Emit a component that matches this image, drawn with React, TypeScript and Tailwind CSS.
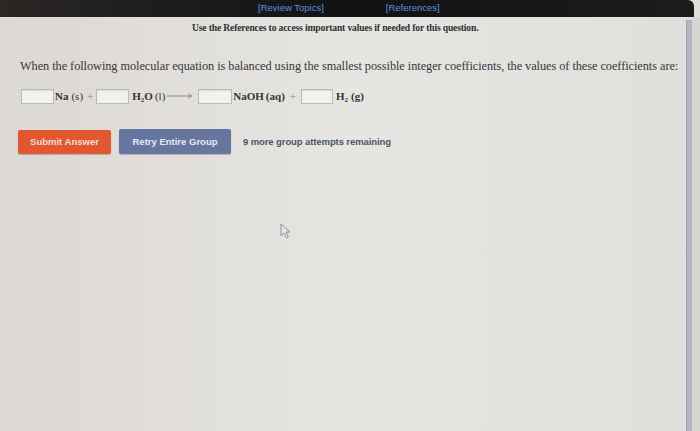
function Blank({ w = 'w-[33px]' }: { w?: string }) {
  return <span className={`inline-block ${w} h-[15px] bg-[#f1f1ef] border border-[#b9bcbf] shadow-[inset_0_1px_1px_rgba(0,0,0,0.1)]`} />
}

export default function App() {
  return (
    <div className="w-[700px] h-[431px] overflow-hidden flex flex-col bg-[#dedcd8] bg-gradient-to-r from-[#dcd8d4] via-[#e6e5e2] to-[#dfdfdb]">
      {/* Top bar */}
      <div className="h-[17px] flex items-center bg-gradient-to-r from-[#2a2725] via-[#121212] to-[#1c1c1c] pl-[258px] gap-[62px] mr-[6px] rounded-tr-[6px] font-['Liberation_Sans',sans-serif] text-[9.5px] text-[#5c8fe0]">
        <span>[Review Topics]</span>
        <span>[References]</span>
      </div>

      <div className="flex flex-1">
        <div className="flex-1 flex flex-col">
          <p className="mt-[4px] pl-[192px] font-['Liberation_Serif',serif] font-bold text-[9.6px] text-[#2f2f33] tracking-[-0.15px]">
            Use the References to access important values if needed for this question.
          </p>

          <p className="mt-[22px] pl-[20px] font-['Liberation_Serif',serif] text-[12.3px] text-[#38373a] tracking-[-0.05px]">
            When the following molecular equation is balanced using the smallest possible integer coefficients, the values of these coefficients are:
          </p>

          <div className="mt-[12px] pl-[21px] flex items-center font-['Liberation_Serif',serif] text-[11px] text-[#333] font-bold">
            <Blank w="w-[33px]" />
            <span className="ml-[1px]">Na</span>
            <span className="ml-[3px] font-normal">(s)</span>
            <span className="ml-[4px] mr-[3px] font-normal text-[#888]">+</span>
            <Blank w="w-[33px]" />
            <span className="ml-[3px]">H<sub className="text-[7px]">2</sub>O</span>
            <span className="ml-[2px] font-normal">(l)</span>
            <svg width="26" height="6" viewBox="0 0 26 6" className="ml-[2px] mr-[5px]">
              <line x1="0" y1="3" x2="24" y2="3" stroke="#777" strokeWidth="0.8" />
              <path d="M21 1 L25 3 L21 5" fill="none" stroke="#777" strokeWidth="0.8" />
            </svg>
            <Blank w="w-[34px]" />
            <span className="ml-[1px]">NaOH</span>
            <span className="ml-[2px]">(aq)</span>
            <span className="ml-[5px] mr-[5px] font-normal text-[#888]">+</span>
            <Blank w="w-[32px]" />
            <span className="ml-[3px]">H<sub className="text-[7px]">2</sub></span>
            <span className="ml-[3px]">(g)</span>
          </div>

          <div className="mt-[25px] pl-[18px] flex items-center font-['Liberation_Sans',sans-serif] text-[9.5px] font-bold">
            <button className="w-[93px] h-[24px] rounded-[2px] bg-[#e1572f] text-[#f6dcd2] shadow-[0_1px_1px_rgba(0,0,0,0.2)]">
              Submit Answer
            </button>
            <button className="ml-[8px] w-[112px] h-[25px] rounded-[2px] bg-[#6676a0] text-[#e6e9f1] shadow-[0_1px_1px_rgba(0,0,0,0.2)]">
              Retry Entire Group
            </button>
            <span className="ml-[12px] text-[#4c5566] tracking-[-0.1px]">9 more group attempts remaining</span>
          </div>

          <div className="mt-[69px] pl-[280px]">
            <svg width="11" height="16" viewBox="0 0 11 16">
              <path d="M1 1 L1 13 L4 10 L6.5 15 L8.5 14 L6 9 L10 9 Z" fill="#e4e6e8" stroke="#8c9096" strokeWidth="1" strokeLinejoin="round" />
            </svg>
          </div>
        </div>

        {/* scrollbar strip */}
        <div className="w-[6px] mt-[3px] bg-[#b1b7c4] border-l border-[#9aa2b3]" />
        <div className="w-[8px] bg-[#d6d6d3]" />
      </div>
    </div>
  )
}
